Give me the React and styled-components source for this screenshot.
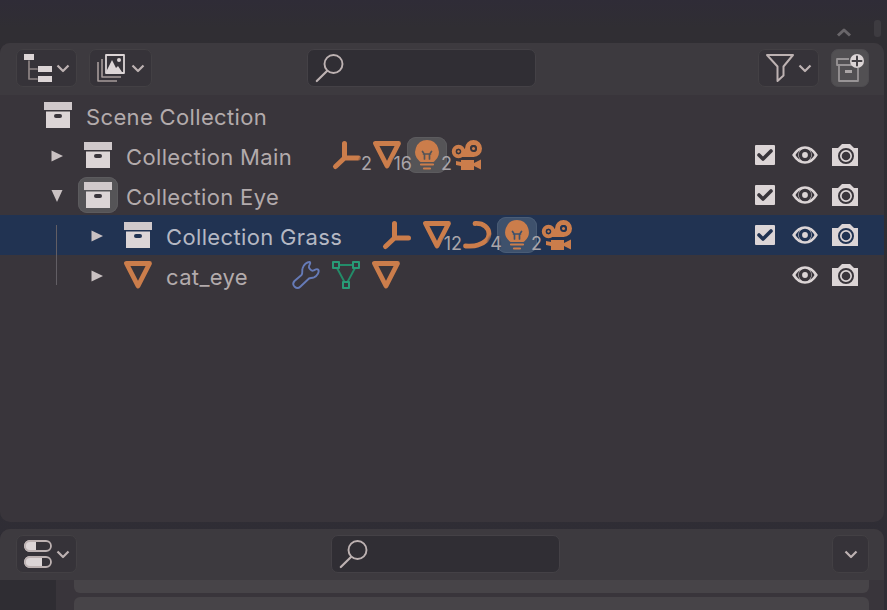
import styled, { createGlobalStyle, css } from 'styled-components'

const colors = {
  window: '#2f2d33',
  header: '#3d3a3f',
  body: '#39353b',
  selected: '#213352',
  icon: '#dcd5d6',
  line: '#bdb2b2',
  text: '#b3abac',
  orange: '#cb7d4b',
}

const GlobalStyle = createGlobalStyle`
  * {
    box-sizing: border-box;
  }

  body {
    margin: 0;
    background: ${colors.window};
    color: ${colors.text};
    font-family: Inter, 'Liberation Sans', sans-serif;
    overflow: hidden;
  }
`

const Window = styled.div`
  display: flex;
  flex-direction: column;
  width: 887px;
  height: 610px;
  padding-right: 3px;
  overflow: hidden;
  background: linear-gradient(#2f2c37, #302e33 28px, #2f2d35);
`

const TopStrip = styled.div`
  display: flex;
  flex: none;
  justify-content: flex-end;
  align-items: flex-start;
  gap: 23px;
  height: 43px;
  padding: 20px 3px 0 0;
`

const Scroller = styled.div`
  width: 7px;
  height: 17px;
  border-radius: 3px;
  background: #3d3b40;
`

const Editor = styled.section`
  flex: none;
  height: ${({ $height }) => $height}px;
  margin-bottom: 7px;
  border-radius: ${({ $cut }) => ($cut ? '10px 10px 0 0' : '10px')};
  background: ${colors.body};
  overflow: hidden;
`

const Header = styled.header`
  display: flex;
  align-items: flex-start;
  height: ${({ $height }) => $height}px;
  padding: 6px 15px 0 16px;
  background: ${colors.header};
`

const HeaderButton = styled.button`
  display: flex;
  flex: none;
  align-items: center;
  justify-content: ${({ $single }) => ($single ? 'center' : 'space-between')};
  width: ${({ $width }) => $width}px;
  height: 38px;
  margin: 0 0 0 ${({ $gap = 0 }) => $gap}px;
  padding: ${({ $single }) => ($single ? '0' : '0 6px 0 7px')};
  border: 1px solid ${({ $active }) => ($active ? '#4e4c50' : '#434044')};
  border-radius: 7px;
  background: ${({ $active }) => ($active ? '#525053' : '#363339')};
`

const Search = styled.div`
  display: flex;
  flex: none;
  align-items: center;
  width: 229px;
  height: 38px;
  margin-left: ${({ $gap }) => $gap}px;
  margin-right: auto;
  padding-left: 8px;
  border: 1px solid #444146;
  border-radius: 7px;
  background: #302e34;
`

const Tree = styled.div`
  position: relative;
`

const Guide = styled.div`
  position: absolute;
  left: 56px;
  top: 130px;
  width: 1px;
  height: 60px;
  background: #625e64;
`

const TreeRow = styled.div`
  display: flex;
  align-items: center;
  height: 40px;
  padding: 0 19px 0 ${({ $level }) => 38 + ($level - 1) * 40}px;
  --row: ${colors.body};

  ${({ $selected }) =>
    $selected &&
    css`
      --row: ${colors.selected};
      background: ${colors.selected};
      color: #b5b8c3;
    `}
`

const Disclosure = styled.div`
  display: flex;
  justify-content: center;
  width: 40px;
  padding-top: 2px;
`

const Cell = styled.div`
  position: relative;
  display: flex;
  flex: none;
  align-items: center;
  justify-content: center;
  width: 40px;
  height: 36px;
  border-radius: 9px;

  ${({ $active }) =>
    $active &&
    css`
      background: ${$active === 'blue' ? '#3e516c' : '#555457'};
      box-shadow: inset 0 0 0 1px ${$active === 'blue' ? '#4a5c75' : '#5c5b5e'};
    `}
`

const Label = styled.span`
  width: ${({ $width }) => $width}px;
  padding: 3px 0 0 8px;
  font-size: 22px;
  line-height: 28px;
  letter-spacing: 0.35px;
  white-space: nowrap;
`

const Count = styled.span`
  position: absolute;
  right: -5px;
  bottom: -2px;
  z-index: 1;
  padding-left: 4px;
  color: #aaa5a9;
  font-size: 18px;
  line-height: 22px;
  background: ${({ $plain }) =>
    $plain
      ? 'none'
      : 'radial-gradient(closest-side, var(--row) 45%, transparent)'};
`

const Toggles = styled.div`
  display: flex;
  margin-left: auto;
`

const Properties = styled.div`
  display: grid;
  grid-template-columns: 56px 795px;
  column-gap: 18px;
  height: 30px;
`

const Tabs = styled.div`
  background: #2f2d33;
`

const Panels = styled.div`
  display: flex;
  flex-direction: column;
  gap: 4px;
`

const Panel = styled.div`
  height: ${({ $height }) => $height}px;
  border-radius: ${({ $first }) => ($first ? '0 0 6px 6px' : '6px 6px 0 0')};
  background: #474448;
`

const Svg = styled.svg`
  display: block;
  flex: none;
  overflow: visible;
  fill: none;
  stroke-linecap: round;
  stroke-linejoin: round;
`

const Chevron = ({ up = false }) => (
  <Svg width="14" height="9" viewBox="0 0 14 9">
    <path
      d={up ? 'M1 7.5 7 2l6 5.5' : 'M1.5 1.5 7 7l5.5-5.5'}
      stroke={up ? '#69666a' : colors.line}
      strokeWidth={up ? 3 : 2.2}
      strokeLinecap="butt"
    />
  </Svg>
)

const OutlinerIcon = () => (
  <Svg width="28" height="28" viewBox="0 0 28 28">
    <path d="M5 7v18h8M5 15h8" stroke="#8e8585" strokeWidth="1.7" />
    <path d="M0 0h10v6H0zM14 12h14v6H14zM14 22h14v6H14z" fill={colors.icon} />
  </Svg>
)

const ViewLayerIcon = () => (
  <Svg width="28" height="28" viewBox="0 0 28 28">
    <path
      d="M1 8v19h19M5 5v18h19"
      stroke="#a79c9b"
      strokeWidth="1.6"
      strokeLinecap="butt"
    />
    <path d="M9 1h18v18H9z" stroke={colors.icon} strokeWidth="1.8" />
    <path d="m9 18 6-12 4 8 2-2 4 6z" fill={colors.icon} />
    <circle cx="22" cy="6" r="2" fill={colors.icon} />
  </Svg>
)

const SearchIcon = () => (
  <Svg width="28" height="28" viewBox="0 0 28 28">
    <circle cx="17.5" cy="10" r="9" stroke={colors.line} strokeWidth="1.9" />
    <path d="M11 17 .8 27" stroke={colors.line} strokeWidth="2.2" />
  </Svg>
)

const FilterIcon = () => (
  <Svg width="28" height="28" viewBox="0 0 28 28">
    <path
      d="M1 1h26L17.5 12.5v9L11.5 27V12.5z"
      stroke={colors.line}
      strokeWidth="2"
    />
  </Svg>
)

const NewCollectionIcon = () => (
  <Svg width="28" height="28" viewBox="0 0 28 28">
    <path
      d="M13 5H1v6h15M3 12v15h19V14"
      stroke="#989496"
      strokeWidth="1.8"
      strokeLinecap="butt"
    />
    <path d="M9 16h7v3H9z" fill="#aaa5a6" />
    <circle cx="21" cy="7" r="7" fill={colors.icon} />
    <path d="M21 2.5v9M16.5 7h9" stroke="#454246" strokeWidth="2" />
  </Svg>
)

const PropertiesIcon = () => (
  <Svg width="28" height="28" viewBox="0 0 28 28">
    <path d="M6 0h6v12H6A6 6 0 0 1 6 0zM6 16h12v12H6a6 6 0 0 1 0-12z" fill={colors.icon} />
    <rect x="1" y="1" width="26" height="10" rx="5" stroke={colors.line} strokeWidth="1.8" />
    <rect x="1" y="17" width="26" height="10" rx="5" stroke={colors.line} strokeWidth="1.8" />
  </Svg>
)

const CollectionIcon = () => (
  <Svg width="28" height="26" viewBox="0 0 28 26">
    <path d="M0 0h28v8H0z" fill="#d0c9cb" />
    <path d="M2 9.5h24V26H2z" fill={colors.icon} />
    <rect x="10" y="12" width="8" height="4" rx="2" fill="var(--row)" />
  </Svg>
)

const Triangle = ({ open }) => (
  <Svg width="12" height="12" viewBox="0 0 12 12">
    <path d={open ? 'M.5 0h11L6 12z' : 'M.5.5 12 6 .5 11.5z'} fill="#c9c1c2" />
  </Svg>
)

const EmptyIcon = () => (
  <Svg width="28" height="28" viewBox="0 0 28 28">
    <path
      d="M11.5 2.5v14.5H25.5M11.5 17l-9 8.5"
      stroke={colors.orange}
      strokeWidth="5"
    />
  </Svg>
)

const MeshIcon = () => (
  <Svg width="28" height="28" viewBox="0 0 28 28">
    <path d="M2.5 2.5h23L14 25z" stroke={colors.orange} strokeWidth="4.8" />
  </Svg>
)

const CurveIcon = () => (
  <Svg width="28" height="28" viewBox="0 0 28 28">
    <path
      d="M12 2.5C21 2 26 7 26 13S21 22 15 24C11 25.5 7 25 2.5 25"
      stroke={colors.orange}
      strokeWidth="4.8"
    />
  </Svg>
)

const LightIcon = ({ ink }) => (
  <Svg width="28" height="30" viewBox="0 0 28 30">
    <path
      d="M14 0a12 12 0 0 1 7.5 21.2c-.8.7-1.500.8-2.500.8H9c-1 0-1.700-.1-2.500-.8A12 12 0 0 1 14 0z"
      fill={colors.orange}
    />
    <path
      d="M11.500 19v-4.500L9.500 11.500M16.500 19v-4.500l2-3M10.500 14h7"
      stroke={ink}
      strokeWidth="1.700"
    />
    <path d="M8.500 23.500h11M8.500 26h11" stroke={ink} strokeWidth=".8" />
    <path d="M8 24.500h12M11 28.500h6" stroke={colors.orange} strokeWidth="2.200" />
  </Svg>
)

const CameraDataIcon = () => (
  <Svg width="30" height="30" viewBox="0 0 30 30">
    <path d="M7 9h15v8H7z" fill={colors.orange} />
    <circle cx="6.500" cy="11.500" r="4.700" stroke={colors.orange} strokeWidth="4" />
    <circle cx="21.500" cy="8.500" r="6" stroke={colors.orange} strokeWidth="5" />
    <circle cx="6.500" cy="11.500" r="2.700" fill="var(--row)" />
    <circle cx="21.500" cy="8.500" r="3.400" fill="var(--row)" />
    <circle cx="6.500" cy="11.500" r="1.200" fill={colors.orange} />
    <circle cx="21.500" cy="8.500" r="1.500" fill={colors.orange} />
    <path
      d="M9 20h13v3l7-3.500v10L22 26v4H9v-4l-5-1v-4l5 1z"
      fill={colors.orange}
    />
  </Svg>
)

const WrenchIcon = () => (
  <Svg width="28" height="28" viewBox="0 0 28 28">
    <path
      d="M17.500 1c1.500.5.500 2-.5 4-.8 2 2.500 5.500 4.500 4.500 2-1 3.500-2 4.500-1 2 2-1 6.500-4 7.800-2 .8-3.500.6-5 1.200L8.500 25.500c-4 4-9.500-1.500-6-5.500L9.500 14c1.500-1.500.3-4 1-6.500C11.500 3.500 15 1 17.500 1z"
      stroke="#667bb8"
      strokeWidth="1.900"
    />
  </Svg>
)

const MeshDataIcon = () => (
  <Svg width="28" height="28" viewBox="0 0 28 28">
    <path d="M7 4h14M5 7l7.500 14M23 7l-7.500 14" stroke="#238c69" strokeWidth="1.900" />
    <path
      d="M1 1h6v6H1zM21 1h6v6h-6zM11 21h6v6h-6z"
      stroke="#299b76"
      strokeWidth="2"
    />
  </Svg>
)

const CheckboxIcon = () => (
  <Svg width="20" height="20" viewBox="0 0 20 20">
    <rect width="20" height="20" rx="1" fill={colors.icon} />
    <path d="m4 10 4 4 8-8" stroke="var(--row)" strokeWidth="3.600" />
  </Svg>
)

const EyeIcon = () => (
  <Svg width="28" height="20" viewBox="0 0 28 20">
    <path
      d="M2 10C5.500 4.500 9 2 14 2s8.500 2.500 12 8c-3.500 5.500-7 8-12 8S5.500 15.500 2 10z"
      fill={colors.icon}
      stroke={colors.icon}
      strokeWidth="1.500"
    />
    <path d="M4.500 10C6 7.500 7.500 6 9 5.200a8 8 0 0 0 0 9.600C7.500 14 6 12.500 4.500 10zM23.500 10c-1.500-2.500-3-4-4.500-4.800a8 8 0 0 1 0 9.600c1.500-.8 3-2.300 4.500-4.800z" fill="var(--row)" />
    <circle cx="14" cy="10" r="4.600" stroke="var(--row)" strokeWidth="3.400" />
  </Svg>
)

const RenderIcon = () => (
  <Svg width="26" height="22" viewBox="0 0 26 22">
    <path d="M0 4h6l4-4h8l4 4h4v18H0z" fill={colors.icon} />
    <circle cx="14" cy="12" r="7" stroke="var(--row)" strokeWidth="2" />
    <circle cx="14" cy="12" r="4.300" fill="var(--row)" />
  </Svg>
)

const contentIcons = {
  empty: EmptyIcon,
  mesh: MeshIcon,
  curve: CurveIcon,
  light: LightIcon,
  camera: CameraDataIcon,
  wrench: WrenchIcon,
  meshData: MeshDataIcon,
}

const rows = [
  {
    name: 'Scene Collection',
    level: 1,
    width: 240,
    root: true,
    contents: [],
  },
  {
    name: 'Collection Main',
    level: 1,
    width: 209,
    checkbox: true,
    contents: [['empty', 2], ['mesh', 16], ['light', 2], ['camera']],
  },
  {
    name: 'Collection Eye',
    level: 1,
    width: 209,
    open: true,
    active: true,
    checkbox: true,
    contents: [],
  },
  {
    name: 'Collection Grass',
    level: 2,
    width: 219,
    selected: true,
    checkbox: true,
    contents: [['empty'], ['mesh', 12], ['curve', 4], ['light', 2], ['camera']],
  },
  {
    name: 'cat_eye',
    level: 2,
    width: 128,
    object: true,
    contents: [['wrench'], ['meshData'], ['mesh']],
  },
]

const OutlinerRow = ({ row }) => (
  <TreeRow $level={row.level} $selected={row.selected}>
    {!row.root && (
      <Disclosure>
        <Triangle open={row.open} />
      </Disclosure>
    )}
    <Cell $active={row.active}>
      {row.object ? <MeshIcon /> : <CollectionIcon />}
    </Cell>
    <Label $width={row.width}>{row.name}</Label>
    {row.contents.map(([type, count]) => {
      const ContentIcon = contentIcons[type]
      const isLight = type === 'light'
      return (
        <Cell
          key={type}
          $active={isLight && (row.selected ? 'blue' : 'gray')}
        >
          <ContentIcon ink={row.selected ? '#3e516c' : '#555457'} />
          {count && <Count $plain={isLight}>{count}</Count>}
        </Cell>
      )
    })}
    {!row.root && (
      <Toggles>
        {row.checkbox && (
          <Cell>
            <CheckboxIcon />
          </Cell>
        )}
        <Cell>
          <EyeIcon />
        </Cell>
        <Cell>
          <RenderIcon />
        </Cell>
      </Toggles>
    )}
  </TreeRow>
)

// row icons sit on a slightly different left edge than the disclosure column
const TreeBody = styled(Tree)`
  ${TreeRow} > ${Disclosure} {
    width: 40px;
    margin-left: -1px;
    margin-right: 1px;
  }
`

export default function App() {
  return (
    <>
      <GlobalStyle />
      <Window>
        <TopStrip>
          <div style={{ paddingTop: 8 }}>
            <Chevron up />
          </div>
          <Scroller />
        </TopStrip>
        <Editor $height={479}>
          <Header $height={52}>
            <HeaderButton $width={61}>
              <OutlinerIcon />
              <Chevron />
            </HeaderButton>
            <HeaderButton $width={63} $gap={12}>
              <ViewLayerIcon />
              <Chevron />
            </HeaderButton>
            <Search $gap={155}>
              <SearchIcon />
            </Search>
            <HeaderButton $width={61}>
              <FilterIcon />
              <Chevron />
            </HeaderButton>
            <HeaderButton $width={38} $gap={12} $single $active>
              <NewCollectionIcon />
            </HeaderButton>
          </Header>
          <TreeBody>
            {rows.map((row) => (
              <OutlinerRow key={row.name} row={row} />
            ))}
            <Guide />
          </TreeBody>
        </Editor>
        <Editor $height={81} $cut>
          <Header $height={51}>
            <HeaderButton $width={61}>
              <PropertiesIcon />
              <Chevron />
            </HeaderButton>
            <Search $gap={254}>
              <SearchIcon />
            </Search>
            <HeaderButton $width={37} $single>
              <Chevron />
            </HeaderButton>
          </Header>
          <Properties>
            <Tabs />
            <Panels>
              <Panel $height={13} $first />
              <Panel $height={13} />
            </Panels>
          </Properties>
        </Editor>
      </Window>
    </>
  )
}
